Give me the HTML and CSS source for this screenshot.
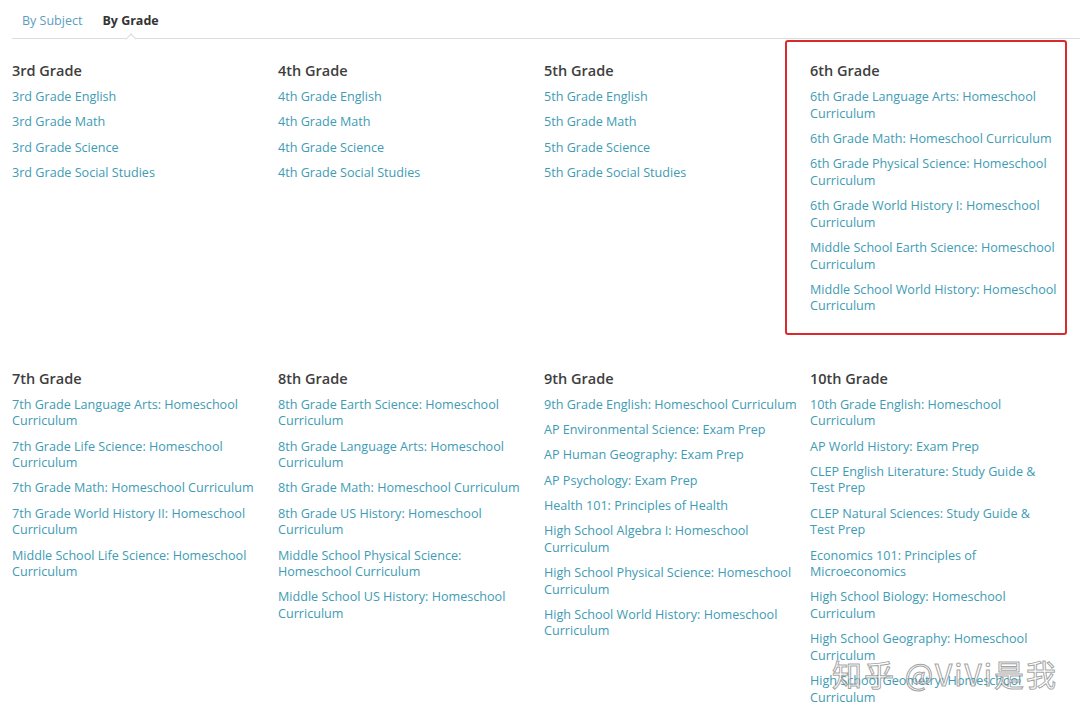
FILE: index.html
```html
<!DOCTYPE html>
<html>
  <head>
    <meta charset="UTF-8" />
    <title>Courses By Grade</title>
    <link rel="stylesheet" href="styles.css">
  </head>

  <body>
    <div id="content">
      <div class="tabs">
        <a class="tab" href="#">By Subject</a>
        <a class="tab active" href="#">By Grade</a>
      </div>

      <div class="grades">
        <div class="grade">
          <h3>3rd Grade</h3>
          <a href="#">3rd Grade English</a>
          <a href="#">3rd Grade Math</a>
          <a href="#">3rd Grade Science</a>
          <a href="#">3rd Grade Social Studies</a>
        </div>
        <div class="grade">
          <h3>4th Grade</h3>
          <a href="#">4th Grade English</a>
          <a href="#">4th Grade Math</a>
          <a href="#">4th Grade Science</a>
          <a href="#">4th Grade Social Studies</a>
        </div>
        <div class="grade">
          <h3>5th Grade</h3>
          <a href="#">5th Grade English</a>
          <a href="#">5th Grade Math</a>
          <a href="#">5th Grade Science</a>
          <a href="#">5th Grade Social Studies</a>
        </div>
        <div class="grade marked">
          <h3>6th Grade</h3>
          <a href="#">6th Grade Language Arts: Homeschool Curriculum</a>
          <a href="#">6th Grade Math: Homeschool Curriculum</a>
          <a href="#">6th Grade Physical Science: Homeschool Curriculum</a>
          <a href="#">6th Grade World History I: Homeschool Curriculum</a>
          <a href="#">Middle School Earth Science: Homeschool Curriculum</a>
          <a href="#">Middle School World History: Homeschool Curriculum</a>
        </div>

        <div class="grade">
          <h3>7th Grade</h3>
          <a href="#">7th Grade Language Arts: Homeschool Curriculum</a>
          <a href="#">7th Grade Life Science: Homeschool Curriculum</a>
          <a href="#">7th Grade Math: Homeschool Curriculum</a>
          <a href="#">7th Grade World History II: Homeschool Curriculum</a>
          <a href="#">Middle School Life Science: Homeschool Curriculum</a>
        </div>
        <div class="grade">
          <h3>8th Grade</h3>
          <a href="#">8th Grade Earth Science: Homeschool Curriculum</a>
          <a href="#">8th Grade Language Arts: Homeschool Curriculum</a>
          <a href="#">8th Grade Math: Homeschool Curriculum</a>
          <a href="#">8th Grade US History: Homeschool Curriculum</a>
          <a href="#">Middle School Physical Science: Homeschool Curriculum</a>
          <a href="#">Middle School US History: Homeschool Curriculum</a>
        </div>
        <div class="grade">
          <h3>9th Grade</h3>
          <a href="#">9th Grade English: Homeschool Curriculum</a>
          <a href="#">AP Environmental Science: Exam Prep</a>
          <a href="#">AP Human Geography: Exam Prep</a>
          <a href="#">AP Psychology: Exam Prep</a>
          <a href="#">Health 101: Principles of Health</a>
          <a href="#">High School Algebra I: Homeschool Curriculum</a>
          <a href="#">High School Physical Science: Homeschool Curriculum</a>
          <a href="#">High School World History: Homeschool Curriculum</a>
        </div>
        <div class="grade">
          <h3>10th Grade</h3>
          <a href="#">10th Grade English: Homeschool Curriculum</a>
          <a href="#">AP World History: Exam Prep</a>
          <a href="#">CLEP English Literature: Study Guide &amp; Test Prep</a>
          <a href="#">CLEP Natural Sciences: Study Guide &amp; Test Prep</a>
          <a href="#">Economics 101: Principles of Microeconomics</a>
          <a href="#">High School Biology: Homeschool Curriculum</a>
          <a href="#">High School Geography: Homeschool Curriculum</a>
          <a href="#">High School Geometry: Homeschool Curriculum</a>
        </div>
      </div>
    </div>

    <!-- watermark over the page -->
    <div class="watermark">知乎 @ViVi是我</div>
  </body>
</html>
```

FILE: styles.css
```css
body {
  margin: 0;
  background: #fff;
  font-family: "Open Sans", "Noto Sans", sans-serif;
  overflow: hidden;
}

#content {
  padding-left: 12px;
}

a {
  text-decoration: none;
}

.tabs {
  display: flex;
  border-bottom: 1px solid #dcdcdc;
  height: 38px;
}

.tab {
  position: relative;
  padding: 0 10px;
  font-size: 12.5px;
  line-height: 41px;
  color: #5b9ec0;
}

.tab.active {
  color: #333;
  font-weight: 700;
}

.tab.active:after {
  content: "";
  position: absolute;
  left: 50%;
  bottom: -5px;
  width: 7px;
  height: 7px;
  margin-left: -4px;
  background: #fff;
  border-top: 1px solid #dcdcdc;
  border-left: 1px solid #dcdcdc;
  transform: rotate(45deg);
}

.grades {
  display: grid;
  grid-template-columns: 266px 266px 266px 247.5px;
  row-gap: 45px;
  padding-top: 22px;
}

.grade {
  position: relative;
  padding-right: 12px;
}

.grade:nth-child(4n) {
  padding-right: 0;
}

.grade h3 {
  margin: 0 0 8px;
  font-size: 14.5px;
  line-height: 20px;
  font-weight: 600;
  color: #3e3e3e;
}

.grade a {
  display: block;
  margin-bottom: 8.7px;
  font-size: 12.6px;
  line-height: 16.6px;
  color: #409bb4;
}

.grade.marked:before {
  content: "";
  position: absolute;
  left: -25px;
  top: -21px;
  width: 278px;
  height: 291px;
  border: 2.5px solid #d92b2b;
  border-radius: 3px;
}

.watermark {
  position: absolute;
  left: 832px;
  top: 654px;
  font-family: "Noto Sans CJK SC", "Noto Sans", sans-serif;
  font-size: 30px;
  line-height: 38px;
  color: rgba(255, 255, 255, 0.55);
  -webkit-text-stroke: 1px rgba(100, 100, 100, 0.6);
  letter-spacing: 2px;
}
```
